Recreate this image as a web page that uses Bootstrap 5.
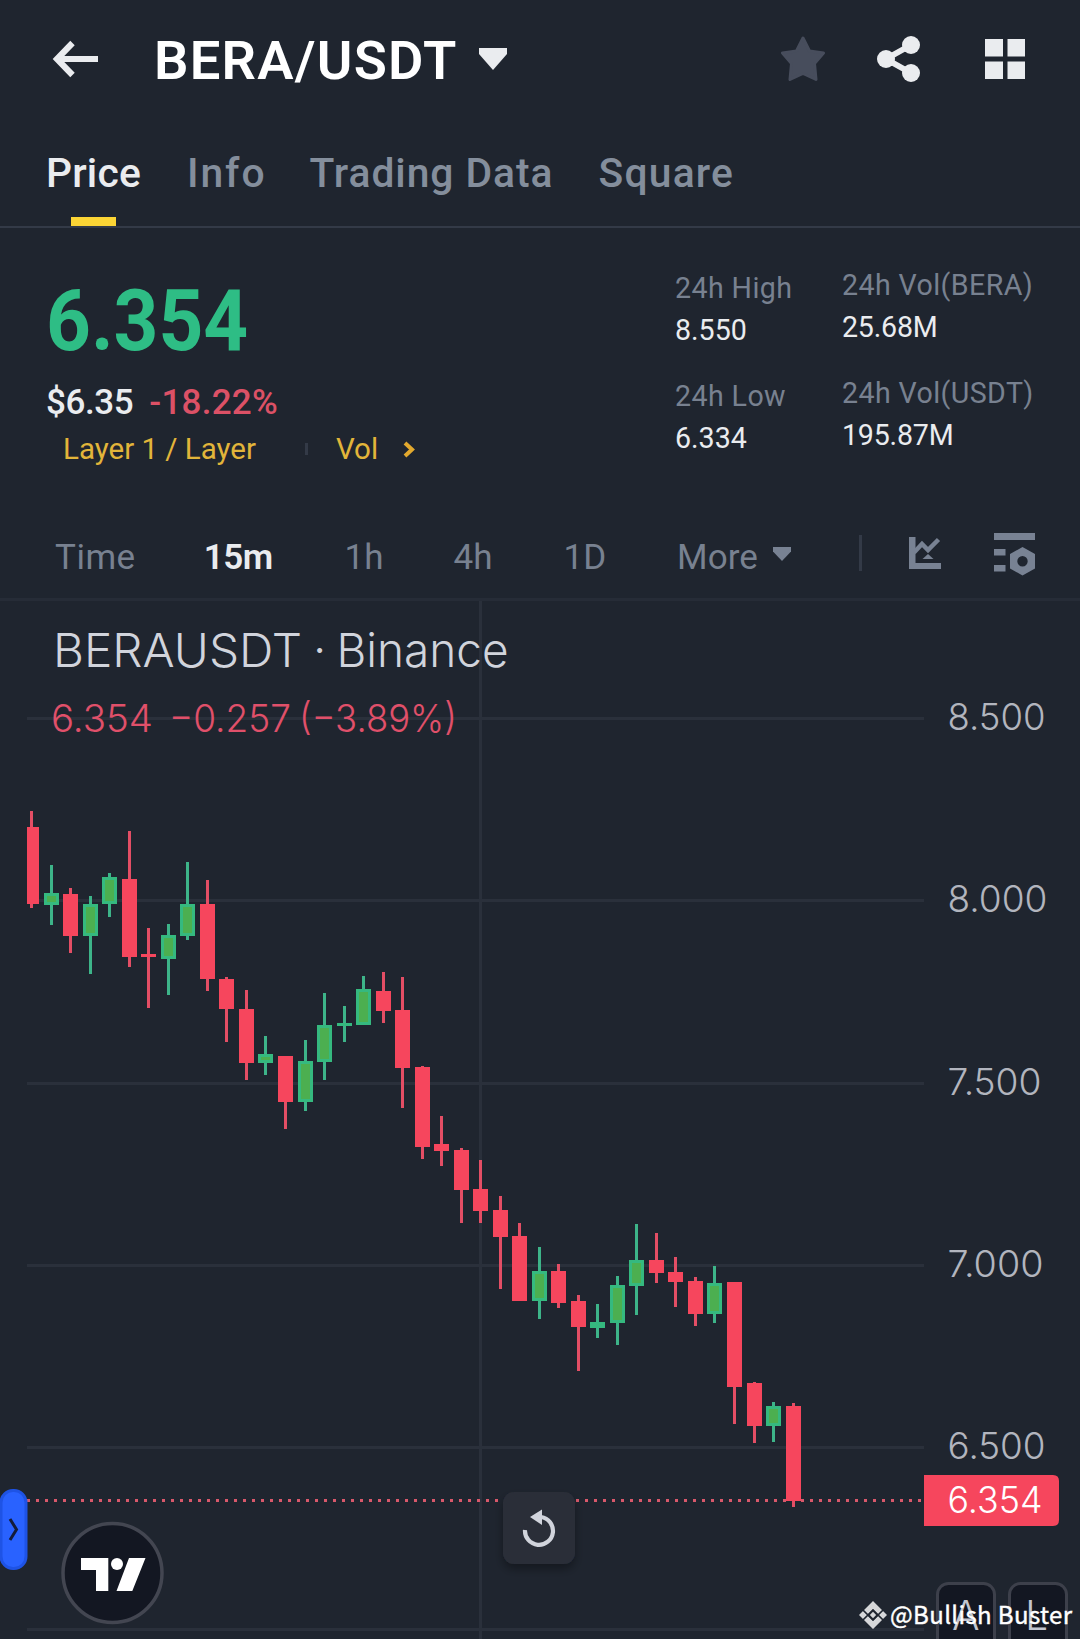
<!DOCTYPE html>
<html lang="en">
<head>
<meta charset="utf-8">
<meta name="viewport" content="width=device-width, initial-scale=1">
<title>BERA/USDT</title>
<link href="https://cdn.jsdelivr.net/npm/bootstrap@5.3.0/dist/css/bootstrap.min.css" rel="stylesheet">
<style>
body{background:#1f252f;color:#eaecef;font-family:Roboto,"Noto Sans",sans-serif;width:1080px;height:1639px;overflow:hidden}
svg{display:block;flex:none}
.topbar{height:117px;padding-left:52px;padding-right:55px}
.pair{font-size:54.3px;font-weight:600;color:#fff;line-height:60px;padding-top:5px;margin-left:55px;letter-spacing:1.25px}
.pair-caret{margin-left:21px}
.ic-share{margin-left:51px}
.ic-grid{margin-left:65px}
.tabs{height:111px;padding:31px 0 0 46px;border-bottom:2px solid #333a47}
.tab-item{font-size:40.8px;font-weight:500;line-height:50px;color:#848e9c;height:78px;letter-spacing:.95px}
.tab-price{color:#eaecef;letter-spacing:.2px}
.tab-info{margin-left:46px;letter-spacing:1.9px}
.tab-data{margin-left:43px}
.tab-square{margin-left:45px;letter-spacing:1.2px}
.tab-bar{width:45px;height:9px;background:#fcd535}
.stats{height:272px;padding:53px 0 0 46px}
.stat-left{width:629px}
.stat-mid{width:167px;margin-top:-8px}
.stat-right{margin-top:-11px}
.last{font-size:85.5px;font-weight:700;line-height:80px;color:#2ebd85}
.last span{display:inline-block;transform:scaleX(.915);transform-origin:0 50%}
.sub{font-size:35px;font-weight:500;line-height:30px;margin-top:27px;letter-spacing:-.4px}
.fall{color:#dc5166;margin-left:16px;letter-spacing:.25px}
.tags{font-size:29.5px;line-height:30px;margin-top:16px;padding-left:17px;color:#e2b53a}
.tag-sep{width:3px;height:12px;margin-left:49px;background:#333a47}
.tag-vol{margin-left:28px}
.tag-chev{margin-left:25px}
.lab{font-size:28.6px;line-height:30px;color:#788190;letter-spacing:.4px}
.val{font-size:28.6px;line-height:30px;margin-top:12px;color:#eaecef}
.stat-right .val{letter-spacing:-.2px}
.cell{height:108px}
.times{height:101px;padding:18px 0 0 55px;border-bottom:3px solid #262c37;font-size:35px;color:#788190}
.t-time{letter-spacing:.5px}
.t-on{color:#eaecef;font-weight:600;letter-spacing:-.5px;margin-left:68px}
.t-1h{margin-left:72px}
.t-4h{margin-left:70px}
.t-1d{margin-left:71px}
.t-more{margin-left:71px}
.t-caret{margin:0 0 9px 15px}
.t-sep{width:3px;height:36px;background:#333a47;margin:0 0 10px 68px}
.t-ic1{margin:0 0 10px 47px}
.t-ic2{margin:0 0 8px 53px}
.chart text{font-family:Inter,"Liberation Sans",sans-serif;font-weight:360}
.chart .wm{font-family:"Noto Sans CJK SC","Noto Sans",sans-serif;font-weight:400}
</style>
</head>
<body>
<header class="topbar d-flex align-items-center">
  <svg width="47" height="38" viewBox="0 0 47 38"><path d="M5 19H46M20.500 3L5 19L20.500 35" fill="none" stroke="#eaecef" stroke-width="6.200"/></svg>
  <span class="pair">BERA/USDT</span>
  <svg class="pair-caret" width="28" height="22" viewBox="0 0 28 22"><path d="M0 0H28V6L14 22L0 6Z" fill="#eaecef"/></svg>
  <div class="d-flex align-items-center ms-auto">
    <svg width="46" height="46" viewBox="0 0 46 46"><path d="M23 2L29.500 15L43.500 17L34.500 27.500L36 43.500L23 37.500L10 43.500L11.500 27.500L2.500 17L16.500 15Z" fill="#474d5c" stroke="#474d5c" stroke-width="3" stroke-linejoin="round"/></svg>
    <svg class="ic-share" width="43" height="46" viewBox="0 0 43 46"><path d="M34 9L9 23L34 37" fill="none" stroke="#eaecef" stroke-width="6"/><g fill="#eaecef"><circle cx="34" cy="9" r="9"/><circle cx="9" cy="23" r="9"/><circle cx="34" cy="37" r="9"/></g></svg>
    <svg class="ic-grid" width="40" height="40" viewBox="0 0 40 40"><path d="M0 0H18V17.500H0ZM22.500 0H40V17.500H22.500ZM0 22.500H18V40H0ZM22.500 22.500H40V40H22.500Z" fill="#eaecef"/></svg>
  </div>
</header>
<nav class="tabs d-flex">
  <div class="tab-item tab-price d-flex flex-column align-items-center justify-content-between"><span>Price</span><div class="tab-bar"></div></div>
  <div class="tab-item tab-info">Info</div>
  <div class="tab-item tab-data">Trading Data</div>
  <div class="tab-item tab-square">Square</div>
</nav>
<section class="stats d-flex">
  <div class="stat-left">
    <div class="last"><span>6.354</span></div>
    <div class="sub d-flex"><span>$6.35</span><span class="fall">-18.22%</span></div>
    <div class="tags d-flex align-items-center"><span>Layer 1 / Layer</span><span class="tag-sep"></span><span class="tag-vol">Vol</span>
      <svg class="tag-chev" width="12" height="17" viewBox="0 0 12 17"><path d="M2 2L9 8.500L2 15" fill="none" stroke="#e2a92e" stroke-width="4"/></svg></div>
  </div>
  <div class="stat-mid">
    <div class="cell"><div class="lab">24h High</div><div class="val">8.550</div></div>
    <div class="cell"><div class="lab">24h Low</div><div class="val">6.334</div></div>
  </div>
  <div class="stat-right">
    <div class="cell"><div class="lab">24h Vol(BERA)</div><div class="val">25.68M</div></div>
    <div class="cell"><div class="lab">24h Vol(USDT)</div><div class="val">195.87M</div></div>
  </div>
</section>
<nav class="times d-flex align-items-center">
  <span class="t-time">Time</span><span class="t-on">15m</span><span class="t-1h">1h</span><span class="t-4h">4h</span><span class="t-1d">1D</span><span class="t-more">More</span>
  <svg class="t-caret" width="18" height="14" viewBox="0 0 18 14"><path d="M0 0H18V4.500L9 14L0 4.500Z" fill="#788293"/></svg>
  <span class="t-sep"></span>
  <svg class="t-ic1" width="32" height="32" viewBox="0 0 32 32" fill="#788293"><path d="M0 0H6.500V26H32V32H0Z"/><path d="M5 15.500L13 7L19 13L29.500 2.500" fill="none" stroke="#788293" stroke-width="4.500"/><path d="M19 17L24.500 22H13.500Z"/></svg>
  <svg class="t-ic2" width="41" height="43" viewBox="0 0 41 43" fill="#788293"><path d="M0 0H41V7H0ZM0 16H11.500V22.500H0ZM0 32H11.500V38.500H0Z"/><path fill-rule="evenodd" d="M28.500 14L41 21V35.500L28.500 42.500L16 35.500V21ZM28.500 23A5.200 5.200 0 1 0 28.500 33.400A5.200 5.200 0 1 0 28.500 23Z"/></svg>
</nav>
<main class="chart">
<svg id="plot" width="1080" height="1038" viewBox="0 601 1080 1038">
  <defs><filter id="soft" x="-30%" y="-30%" width="160%" height="170%"><feDropShadow dx="0" dy="5" stdDeviation="5" flood-color="#000" flood-opacity=".35"/></filter></defs>
  <g fill="#2a303b">
    <rect x="479" y="601" width="3" height="1038"/>
    <rect x="27" y="717" width="897" height="3"/><rect x="27" y="899" width="897" height="3"/><rect x="27" y="1082" width="897" height="3"/>
    <rect x="27" y="1264" width="897" height="3"/><rect x="27" y="1446" width="897" height="3"/><rect x="27" y="1628" width="897" height="3"/>
  </g>
  <path d="M27 1500.500H924" stroke="#d9586b" stroke-width="3" stroke-dasharray="3 6"/>
  <g id="candles"></g>
  <g fill="#d1d4dc" font-size="47">
    <text x="53" y="667" textLength="249" lengthAdjust="spacingAndGlyphs">BERAUSDT</text><text x="313" y="667">·</text><text x="336.500" y="667" textLength="172" lengthAdjust="spacingAndGlyphs">Binance</text>
  </g>
  <g fill="#e0506a" font-size="38.500">
    <text x="51" y="732" textLength="102" lengthAdjust="spacingAndGlyphs">6.354</text><text x="169" y="732" textLength="122" lengthAdjust="spacingAndGlyphs">−0.257</text><text x="299" y="732" textLength="158" lengthAdjust="spacingAndGlyphs">(−3.89%)</text>
  </g>
  <g fill="#b2b5be" font-size="36.500">
    <text x="947.500" y="730" textLength="98" lengthAdjust="spacingAndGlyphs">8.500</text><text x="947.500" y="912" textLength="100" lengthAdjust="spacingAndGlyphs">8.000</text><text x="947.500" y="1095" textLength="94" lengthAdjust="spacingAndGlyphs">7.500</text><text x="947.500" y="1277" textLength="96" lengthAdjust="spacingAndGlyphs">7.000</text><text x="947.500" y="1459" textLength="98" lengthAdjust="spacingAndGlyphs">6.500</text>
  </g>
  <path d="M924 1475H1053Q1059 1475 1059 1481V1520Q1059 1526 1053 1526H924Z" fill="#f6465d"/>
  <text x="947.500" y="1513" font-size="36.500" fill="#fff" textLength="95" lengthAdjust="spacingAndGlyphs">6.354</text>
  <rect x="1" y="1490.500" width="25" height="78" rx="12" fill="#2962ff" stroke="#1e53e5" stroke-width="3"/>
  <path d="M10 1519L16.500 1529.500L10 1540" fill="none" stroke="#131c3a" stroke-width="3"/>
  <circle cx="112.500" cy="1573" r="49.500" fill="#131722" stroke="#434651" stroke-width="3.500"/>
  <g fill="#fff"><path d="M81 1558H108.300V1591H96V1570H81ZM129 1558H145.500L132.300 1591H116.500Z"/><circle cx="117" cy="1564" r="6"/></g>
  <rect x="503" y="1492" width="72" height="72" rx="11" fill="#2a2e39" filter="url(#soft)"/>
  <path d="M525 1530A14 14 0 1 0 541 1517" fill="none" stroke="#d1d4dc" stroke-width="4.200"/><path d="M530 1517L542 1509.500V1525Z" fill="#d1d4dc"/>
  <g fill="#131722" stroke="#3d404b" stroke-width="3"><rect x="937.500" y="1583.500" width="57" height="66" rx="11"/><rect x="1009.500" y="1583.500" width="57" height="66" rx="11"/></g>
  <g fill="#c3c6d0" font-size="41"><text x="952" y="1630">A</text><text x="1025" y="1630">L</text></g>
  <g fill="#d6d7d9"><path d="M873 1601L883 1611L879 1615L873 1609L867 1615L863 1611ZM873 1629L883 1619L879 1615L873 1621L867 1615L863 1619Z"/><path d="M863 1611L867 1615L863 1619L859 1615ZM883 1611L887 1615L883 1619L879 1615Z"/></g>
  <path d="M867 1615L873 1609L879 1615L873 1621Z" fill="#1f252f"/><path d="M863 1610L868 1615L863 1620M883 1610L878 1615L883 1620" fill="none" stroke="#1f252f" stroke-width="1.500"/><path d="M873 1611.800L876.200 1615L873 1618.200L869.800 1615Z" fill="#d6d7d9"/>
  <text class="wm" x="890" y="1624" font-size="24" fill="#fff" stroke="#fff" stroke-width=".4" textLength="182">@Bullish Buster</text>
</svg>
</main>
<script>
// centre x, high, body top, body bottom, low, rising
const rows = [
[31.5,811,827,904,908,0],[51.5,865,893,905,925,1],[70.5,888,894,936,953,0],[90.5,896,904,936,974,1],[109.5,873,877,904,917,1],
[129.5,831,879,957,967,0],[148.5,928,954,957,1008,0],[168.5,924,935,959,995,1],[187.5,862,904,936,940,1],[207.5,880,904,979,991,0],
[226.5,977,979,1009,1042,0],[246.5,990,1009,1063,1080,0],[265.5,1036,1054,1063,1075,1],[285.5,1056,1056,1102,1129,0],[305.5,1040,1061,1102,1111,1],
[324.5,993,1025,1062,1080,1],[344.5,1006,1023,1026,1042,1],[363.5,976,989,1025,1025,1],[383.5,972,991,1011,1023,0],[402.5,977,1010,1068,1108,0],
[422.5,1066,1067,1147,1159,0],[441.5,1116,1144,1151,1166,0],[461.5,1148,1150,1190,1223,0],[480.5,1160,1189,1211,1223,0],[500.5,1196,1210,1237,1289,0],
[519.5,1223,1236,1301,1301,0],[539.5,1247,1271,1301,1319,1],[558.5,1264,1271,1303,1308,0],[578.5,1295,1301,1327,1371,0],[597.5,1304,1322,1328,1338,1],
[617.5,1276,1285,1323,1345,1],[636.5,1224,1260,1286,1315,1],[656.5,1233,1260,1273,1283,0],[675.5,1257,1272,1282,1307,0],[695.5,1277,1281,1314,1326,0],
[714.5,1266,1283,1314,1323,1],[734.5,1282,1282,1387,1424,0],[754.5,1382,1383,1426,1443,0],[773.5,1402,1406,1426,1442,1],[793.5,1403,1406,1501,1507,0]];
const rect = (x, y, w, h, f) => `<rect x="${x}" y="${y}" width="${w}" height="${h}" fill="${f}"/>`;
document.getElementById('candles').innerHTML = rows.map(([x, hi, t, b, lo, up]) => {
  const left = Math.max(27, x - 7.5), w = x + 7.5 - left;
  let s = rect(x - 1.5, hi, 3, lo - hi, up ? '#3db489' : '#e34e65') + rect(left, t, w, b - t, up ? '#35b97f' : '#f6465d');
  if (up && b - t > 6) s += rect(left + 3, t + 3, w - 6, b - t - 6, '#4caf50');
  return s;
}).join('');
</script>
<script src="https://cdn.jsdelivr.net/npm/bootstrap@5.3.0/dist/js/bootstrap.bundle.min.js"></script>
</body>
</html>
